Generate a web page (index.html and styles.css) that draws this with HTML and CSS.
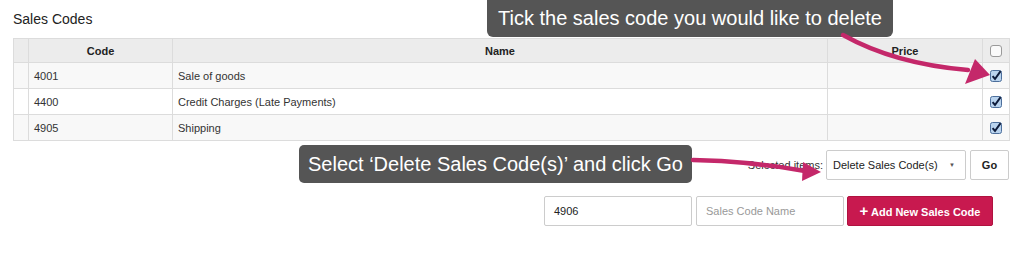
FILE: index.html
```html
<!DOCTYPE html>
<html>
<head>
<meta charset="utf-8">
<link rel="stylesheet" href="styles.css">
</head>
<body>
<div class="page">
  <h2 class="title">Sales Codes</h2>
  <table class="grid">
    <colgroup>
      <col class="c-idx"><col class="c-code"><col class="c-name"><col class="c-price"><col class="c-chk">
    </colgroup>
    <thead>
      <tr><th></th><th>Code</th><th>Name</th><th>Price</th><th class="chk"><svg class="cb" viewBox="0 0 12 12"><rect x="0.5" y="0.5" width="11" height="11" rx="2.5" fill="#fafafa" stroke="#9a9a9a"/></svg></th></tr>
    </thead>
    <tbody>
      <tr class="odd"><td></td><td>4001</td><td>Sale of goods</td><td></td><td class="chk"><svg class="cb" viewBox="0 0 12 12"><rect x="0.5" y="0.5" width="11" height="11" rx="2" fill="#b9d3ee" stroke="#4d6f9c"/><path d="M2.6 6.2 L5 9 L10.6 1.2" fill="none" stroke="#0d1b3a" stroke-width="2"/></svg></td></tr>
      <tr><td></td><td>4400</td><td>Credit Charges (Late Payments)</td><td></td><td class="chk"><svg class="cb" viewBox="0 0 12 12"><rect x="0.5" y="0.5" width="11" height="11" rx="2" fill="#b9d3ee" stroke="#4d6f9c"/><path d="M2.6 6.2 L5 9 L10.6 1.2" fill="none" stroke="#0d1b3a" stroke-width="2"/></svg></td></tr>
      <tr class="odd"><td></td><td>4905</td><td>Shipping</td><td></td><td class="chk"><svg class="cb" viewBox="0 0 12 12"><rect x="0.5" y="0.5" width="11" height="11" rx="2" fill="#b9d3ee" stroke="#4d6f9c"/><path d="M2.6 6.2 L5 9 L10.6 1.2" fill="none" stroke="#0d1b3a" stroke-width="2"/></svg></td></tr>
    </tbody>
  </table>
  <div class="actions">
    <span class="label">Selected items:</span>
    <div class="select"><span>Delete Sales Code(s)</span><span class="caret">&#9660;</span></div>
    <button class="btn go">Go</button>
  </div>
  <div class="add">
    <div class="input">4906</div>
    <div class="input ph">Sales Code Name</div>
    <button class="btn primary"><span class="plus">+</span> Add New Sales Code</button>
  </div>
</div>
<div class="tip tip1">Tick the sales code you would like to delete</div>
<div class="tip tip2">Select ‘Delete Sales Code(s)’ and click Go</div>
<svg class="arrows" width="1024" height="255" viewBox="0 0 1024 255">
  <path d="M843 35 Q 895 64 968 70" fill="none" stroke="#c4286a" stroke-width="4.5" stroke-linecap="round"/>
  <polygon points="990,75 975,59 965,84" fill="#c4286a"/>
  <path d="M693 160 Q 750 161 805 171" fill="none" stroke="#c4286a" stroke-width="4.5" stroke-linecap="round"/>
  <polygon points="821,172 803,162 802,181" fill="#c4286a"/>
</svg>
</body>
</html>
```
FILE: styles.css
```css
html, body {
  margin: 0;
  padding: 0;
  background: #fff;
}
body {
  font-family: "Liberation Sans", Arial, sans-serif;
  color: #333;
  width: 1024px;
  height: 255px;
  overflow: hidden;
  position: relative;
}
.page {
  padding: 0 15px 0 13px;
}
.title {
  margin: 10px 0 10px;
  font-size: 14px;
  line-height: 18px;
  font-weight: normal;
  color: #222;
}
.grid {
  width: 996px;
  table-layout: fixed;
  border-collapse: collapse;
  font-size: 11px;
}
.c-idx { width: 15px; }
.c-code { width: 144px; }
.c-name { width: 655px; }
.c-price { width: 155px; }
.c-chk { width: 27px; }
.grid th, .grid td {
  border: 1px solid #dcdcdc;
  padding: 0 5px;
  text-align: left;
  color: #333;
}
.grid th {
  height: 23px;
  background: #ececec;
  font-weight: bold;
  text-align: center;
  color: #222;
}
.grid td {
  height: 25px;
  background: #fff;
}
.grid tr.odd td {
  background: #f8f8f8;
}
.grid th.chk, .grid td.chk {
  padding: 0;
  text-align: center;
}
.cb {
  width: 12px;
  height: 12px;
  display: block;
  margin: 0 auto;
}
.actions {
  display: flex;
  justify-content: flex-end;
  align-items: center;
  gap: 4px;
  margin-top: 9px;
  height: 30px;
  font-size: 11px;
}
.label {
  margin-right: -1px;
  color: #333;
}
.select {
  border: 1px solid #ccc;
  border-radius: 2px;
  display: flex;
  align-items: center;
  justify-content: space-between;
  padding: 0 10px 0 6px;
  box-sizing: border-box;
  width: 140px;
  height: 30px;
  color: #222;
}
.caret {
  font-size: 6px;
  color: #555;
}
.btn {
  font-family: "Liberation Sans", Arial, sans-serif;
  font-size: 11px;
  font-weight: bold;
  height: 30px;
  border-radius: 2px;
  box-sizing: border-box;
  cursor: pointer;
}
.go {
  width: 39px;
  background: #fff;
  border: 1px solid #ccc;
  color: #222;
  padding: 0;
}
.add {
  display: flex;
  justify-content: flex-end;
  gap: 4px;
  margin-top: 16px;
  padding-right: 16px;
  height: 30px;
  font-size: 11px;
}
.input {
  width: 148px;
  height: 30px;
  box-sizing: border-box;
  border: 1px solid #ccc;
  border-radius: 2px;
  display: flex;
  align-items: center;
  padding: 0 9px;
  color: #222;
}
.input.ph {
  color: #999;
}
.primary {
  width: 146px;
  margin-left: -1px;
  background: #c8194f;
  border: 1px solid #b0123f;
  color: #fff;
  padding: 0;
}
.plus {
  font-size: 15px;
  line-height: 11px;
}
.tip {
  position: absolute;
  background: #555;
  color: #fff;
  font-size: 20px;
  display: flex;
  align-items: center;
  justify-content: center;
  box-sizing: border-box;
  white-space: nowrap;
}
.tip1 {
  left: 487px;
  top: -8px;
  width: 406px;
  height: 45px;
  padding-top: 8px;
  border-radius: 6px;
}
.tip2 {
  left: 299px;
  top: 145px;
  width: 393px;
  height: 38px;
  border-radius: 5px;
}
.arrows {
  position: absolute;
  left: 0;
  top: 0;
  pointer-events: none;
}
```
